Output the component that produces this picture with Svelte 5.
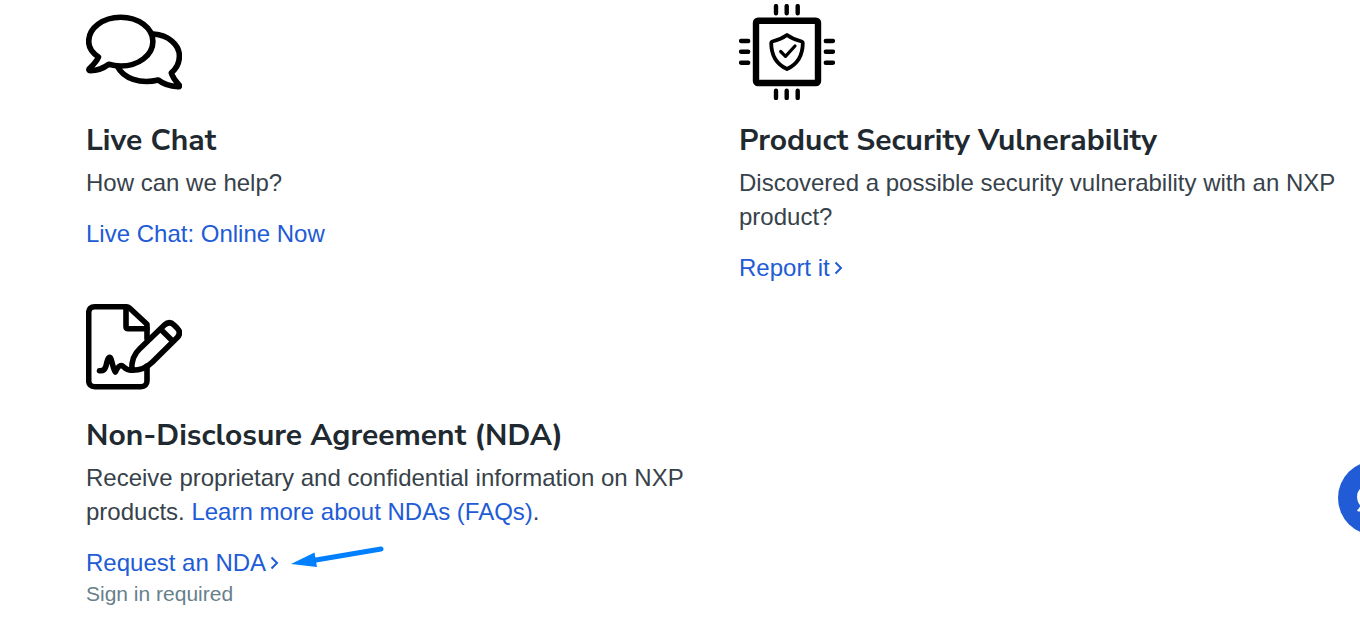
<script lang="ts">
	type Card = {
		icon: 'chat' | 'chip' | 'sign';
		title: string;
		text: string;
		more?: string;
		link: string;
		chevron?: boolean;
		pointer?: boolean;
		note?: string;
	};

	const cards: Card[] = [
		{
			icon: 'chat',
			title: 'Live Chat',
			text: 'How can we help?',
			link: 'Live Chat: Online Now'
		},
		{
			icon: 'chip',
			title: 'Product Security Vulnerability',
			text: 'Discovered a possible security vulnerability with an NXP product?',
			link: 'Report it',
			chevron: true
		},
		{
			icon: 'sign',
			title: 'Non-Disclosure Agreement (NDA)',
			text: 'Receive proprietary and confidential information on NXP products.',
			more: 'Learn more about NDAs (FAQs)',
			link: 'Request an NDA',
			chevron: true,
			pointer: true,
			note: 'Sign in required'
		}
	];
</script>

<main class="support">
	{#each cards as card}
		<section class="card">
			<svg class="icon" viewBox="0 0 96 96" aria-hidden="true">
				{#if card.icon === 'chat'}
					<path
						d="M22.7 60.3C26.5 61.4 30.5 62 34.7 62C52.5 62 66.9 51.2 66.9 37.5C66.9 24 52.5 13.3 34.7 13.3C17 13.3 2.7 24 2.7 37.5C2.7 43.5 6.5 49 12.5 53C10.5 58 6.5 61.5 3.3 64.7C2.5 65.8 3 66.7 4.2 66.7C12 66.6 18 64 22.7 60.3Z"
					/>
					<path
						d="M67.5 30C82 31 93.4 40.5 93.4 52C93.4 58.5 90.5 64.5 85.3 68.8C86.5 73.5 89.5 77 93 80.8C94 82 93.4 83 92 82.7C84.5 82.3 77 79.8 72.3 76C54 80.3 37.5 74.5 31.5 62.5"
					/>
				{:else if card.icon === 'chip'}
					<rect class="body" x="17" y="16.7" width="62" height="62.3" rx="2" />
					<g class="pins">
						<path d="M37 2.1v7.1M47.7 2.1v7.1M58.7 2.1v7.1" />
						<path d="M37 86.8v7.1M47.7 86.8v7.1M58.7 86.8v7.1" />
						<path d="M2.1 37h7.1M2.1 47.7h7.1M2.1 58.7h7.1" />
						<path d="M86.8 37h7.1M86.8 47.7h7.1M86.8 58.7h7.1" />
					</g>
					<path
						class="shield"
						d="M48 31C43.5 34.3 38.5 36.3 33.3 37.5C32.6 37.7 32.2 38.2 32.2 39C32.3 51 37.5 60.3 48 65C58.5 60.3 63.7 51 63.8 39C63.8 38.2 63.4 37.7 62.7 37.5C57.5 36.3 52.5 34.3 48 31Z"
					/>
					<path class="check" d="M41.7 47.5L46.5 52.3L56 42" />
				{:else}
					<path
						d="M61 39.5V25.3L43.5 9C42.5 8 41.5 7.7 40 7.7H8.7C5 7.7 2.7 10 2.7 13.7V81.7C2.7 85.4 5 87.7 8.7 87.7H55C58.7 87.7 61 85.4 61 81.7V67"
					/>
					<path d="M40 8V27.5C40 29 40.8 29.7 42.2 29.7H61" />
					<path
						d="M45.7 71.3C45.5 62.5 48 55 53.5 50L78.2 26.2C82 22.8 85 23 88 26L91.3 29.3C94.3 32.5 94 35.7 91 38.7L66.5 63C61 68.5 54 71.5 45.7 71.3Z"
					/>
					<path d="M75.7 31.3L85.3 40.7" />
					<path
						d="M13.5 71.7C17 72.2 18.8 71 19.8 67.5C21 63 22 58.3 23.7 58.3C25.7 58.3 26.5 69 29.3 73C31 69.5 33 66.3 35.5 66.5C38.3 66.8 38.3 71.3 45.7 71.3"
					/>
				{/if}
			</svg>
			<h2>{card.title}</h2>
			<p>
				{card.text}
				{#if card.more}
					<a href="#faqs">{card.more}</a>.
				{/if}
			</p>
			<div class="action">
				<a href="#{card.icon}">
					{card.link}{#if card.chevron}<svg class="chevron" viewBox="0 0 9 14" aria-hidden="true"
							><path d="M1.5 1.5L7 7L1.5 12.5" /></svg
						>{/if}
				</a>
				{#if card.pointer}
					<svg class="pointer" viewBox="0 0 94 24" aria-hidden="true">
						<path d="M22 14.5L90 3" />
						<polygon points="0,18 23.5,6.5 26,21" />
					</svg>
				{/if}
			</div>
			{#if card.note}
				<small>{card.note}</small>
			{/if}
		</section>
	{/each}
</main>

<button class="chat-button" aria-label="Open chat">
	<svg viewBox="0 0 36 36" aria-hidden="true">
		<path
			d="M18 4C9 4 1 9 1 16.5C1 20 2 22.5 4 25C3.5 27 2.5 28.5 1 29.5C1 31.5 8 31 11 28C24 31 34 25 34 16.5C34 9 27 4 18 4Z"
		/>
	</svg>
</button>

<style>
	:global(body) {
		margin: 0;
		background: #fff;
	}

	.support {
		display: grid;
		grid-template-columns: 1fr 1fr;
		gap: 14px 32px;
		padding: 4px 0 20px 86px;
		color: #37424a;
		font-family: 'Liberation Sans', Arial, sans-serif;
		font-size: 24px;
		line-height: 34px;
	}

	.icon {
		display: block;
		width: 96px;
		height: 96px;
		fill: none;
		stroke: #000;
		stroke-width: 5.6;
		stroke-linecap: round;
		stroke-linejoin: round;
	}

	.icon .body {
		stroke-width: 6.4;
	}

	.icon .pins {
		stroke-width: 4.4;
	}

	.icon .shield {
		stroke-width: 3.8;
	}

	.icon .check {
		stroke-width: 3.2;
	}

	h2 {
		margin: 23px 0 7px;
		color: #212930;
		font-family: 'Nunito Sans', Nunito, Lato, sans-serif;
		font-size: 30px;
		font-weight: 700;
		line-height: 36px;
	}

	p {
		margin: 0 0 17px;
	}

	a {
		color: #215bd6;
		text-decoration: none;
	}

	a:hover {
		text-decoration: underline;
	}

	.action {
		display: flex;
		align-items: center;
		gap: 12px;
	}

	.chevron {
		width: 9px;
		height: 14px;
		margin-left: 4px;
		fill: none;
		stroke: currentColor;
		stroke-width: 2;
		vertical-align: 1px;
	}

	.pointer {
		width: 94px;
		height: 24px;
		margin-bottom: 10px;
		fill: #0080ff;
	}

	.pointer path {
		stroke: #0080ff;
		stroke-width: 5;
		stroke-linecap: round;
	}

	small {
		display: block;
		color: #687f8b;
		font-size: 21px;
		line-height: 28px;
	}

	.chat-button {
		position: fixed;
		right: -52px;
		bottom: 93px;
		display: flex;
		align-items: center;
		justify-content: center;
		width: 74px;
		height: 74px;
		padding: 0;
		border: 0;
		border-radius: 50%;
		background: #215bd6;
		cursor: pointer;
	}

	.chat-button svg {
		width: 38px;
		height: 38px;
		fill: #fff;
	}
</style>
